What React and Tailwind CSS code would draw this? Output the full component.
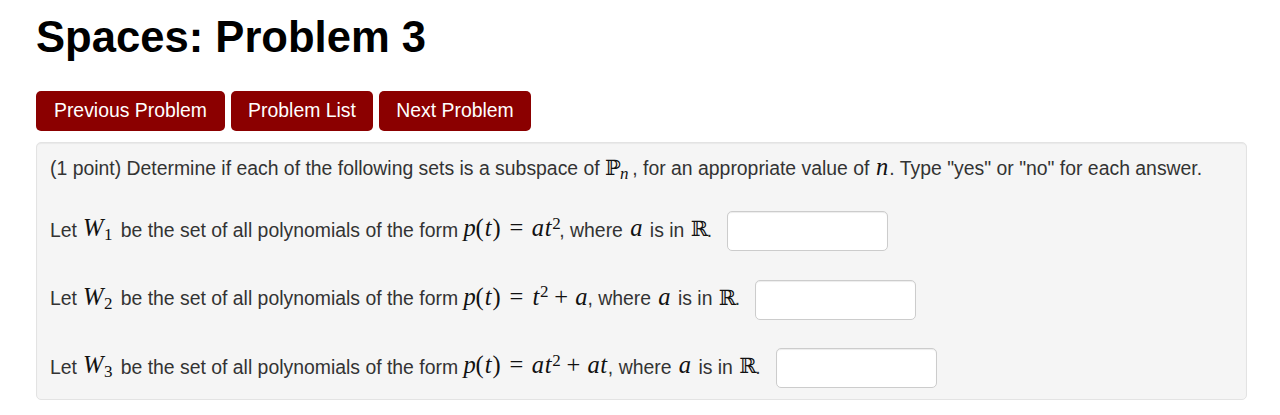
import React from "react";

const T = ({ c, children }) => (
  <span className={"inline-block text-center " + c}>{children}</span>
);

const M = ({ children }) => (
  <span className="font-['Liberation_Serif',serif] text-[24.5px] leading-none text-[#111111] whitespace-nowrap">
    {children}
  </span>
);

const V = ({ c, children }) => <T c={"italic " + c}>{children}</T>;

const Sup = ({ children }) => (
  <span className="inline-block w-[7px] text-left text-[17px] align-[7.5px]">
    {children}
  </span>
);

const Sub = ({ c, children }) => (
  <span className={"inline-block text-left text-[17px] align-[-4px] " + c}>
    {children}
  </span>
);

const Eq = () => <T c="w-[17.9px] mx-[6.4px]">=</T>;
const Plus = () => <T c="w-[17.9px] mx-[5.1px]">+</T>;
const PofT = () => (
  <>
    <V c="w-[11.6px]">p</V>
    <T c="w-[8.9px]">(</T>
    <V c="w-[8.3px]">t</V>
    <T c="w-[8.9px]">)</T>
  </>
);
const RR = () => (
  <M>
    <T c="w-[16px] ml-[1px] font-['DejaVu_Serif',serif] text-[21px]">ℝ</T>
  </M>
);
const A = () => (
  <M>
    <V c="w-[12.2px] mx-[2px]">a</V>
  </M>
);

const Wn = ({ n }) => (
  <M>
    <V c="w-[21.6px]">W</V>
    <Sub c="w-[11.4px] not-italic">{n}</Sub>
  </M>
);

const Answer = () => (
  <input
    type="text"
    className="ml-[15px] w-[161px] h-[40px] bg-white border border-[#cccccc] rounded-[5px] shadow-[inset_0_1px_1px_rgba(0,0,0,0.075)] outline-none"
  />
);

export default function App() {
  return (
    <div className="w-[1280px] h-[415px] bg-white pl-[36px] font-['Liberation_Sans',Arial,sans-serif] text-[#333333] overflow-hidden">
      <h1 className="pt-[15px] text-[43.6px] leading-[44px] font-bold text-[#000000]">
        Spaces: Problem 3
      </h1>
      <div className="mt-[32px] flex gap-[6px]">
        <button className="h-[40px] w-[189px] rounded-[5px] bg-[#8b0000] text-white text-[19.4px] flex items-center justify-center">
          Previous Problem
        </button>
        <button className="h-[40px] w-[142px] rounded-[5px] bg-[#8b0000] text-white text-[19.4px] flex items-center justify-center">
          Problem List
        </button>
        <button className="h-[40px] w-[152px] rounded-[5px] bg-[#8b0000] text-white text-[19.4px] flex items-center justify-center">
          Next Problem
        </button>
      </div>
      <div className="mt-[11px] w-[1211px] border border-[#e3e3e3] bg-[#f5f5f5] rounded-[5px] shadow-[inset_0_1px_1px_rgba(0,0,0,0.05)] pl-[13px] pt-[11.8px] pb-[11px] flex flex-col gap-[28.5px] text-[19.4px]">
        <p className="leading-[27.7px]">
          (1 point) Determine if each of the following sets is a subspace of{" "}
          <M>
            <T c="w-[15px] font-['DejaVu_Serif',serif] text-[21px]">ℙ</T>
            <Sub c="w-[12.2px] italic">n</Sub>
          </M>
          , for an appropriate value of{" "}
          <M>
            <V c="w-[14.5px]">n</V>
          </M>
          . Type "yes" or "no" for each answer.
        </p>
        <div className="flex items-center h-[40px]">
          <span className="leading-[27.7px] pb-[3px]">
            Let <Wn n="1" /> be the set of all polynomials of the form{" "}
            <M>
              <PofT />
              <Eq />
              <V c="w-[12.2px]">a</V>
              <V c="w-[8.3px]">t</V>
              <Sup>2</Sup>
            </M>
            , where <A /> is in <RR />.
          </span>
          <Answer />
        </div>
        <div className="flex items-center h-[40px]">
          <span className="leading-[27.7px] pb-[3px]">
            Let <Wn n="2" /> be the set of all polynomials of the form{" "}
            <M>
              <PofT />
              <Eq />
              <V c="w-[8.3px]">t</V>
              <Sup>2</Sup>
              <Plus />
              <V c="w-[12.2px]">a</V>
            </M>
            , where <A /> is in <RR />.
          </span>
          <Answer />
        </div>
        <div className="flex items-center h-[40px]">
          <span className="leading-[27.7px] pb-[3px]">
            Let <Wn n="3" /> be the set of all polynomials of the form{" "}
            <M>
              <PofT />
              <Eq />
              <V c="w-[12.2px]">a</V>
              <V c="w-[8.3px]">t</V>
              <Sup>2</Sup>
              <Plus />
              <V c="w-[12.2px]">a</V>
              <V c="w-[8.3px]">t</V>
            </M>
            , where <A /> is in <RR />.
          </span>
          <Answer />
        </div>
      </div>
    </div>
  );
}
